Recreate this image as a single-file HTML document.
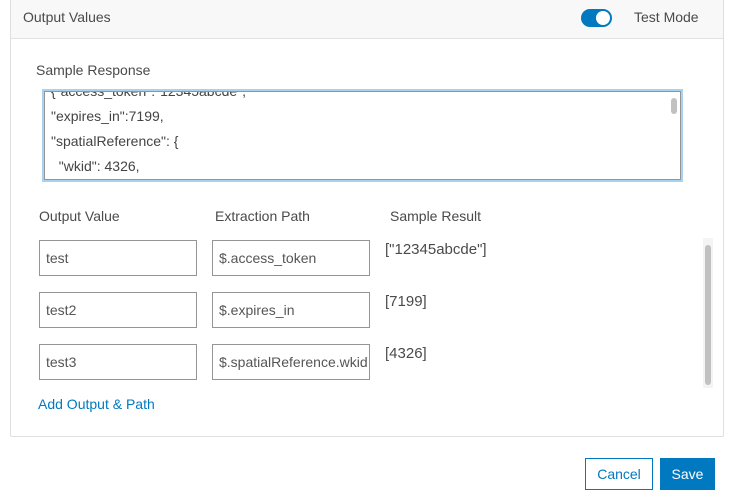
<!DOCTYPE html>
<html><head><style>
*{box-sizing:border-box;margin:0;padding:0}
body{width:737px;height:498px;background:#fff;font-family:"Liberation Sans",sans-serif;font-size:14px;color:#4a4a4a;position:relative;overflow:hidden}
.a{position:absolute}
.panel{left:10px;top:-1px;width:714px;height:438px;border:1px solid #dfdfdf;border-radius:2px}
.hdr{left:11px;top:0;width:712px;height:39px;background:#f8f8f8;border-bottom:1px solid #e2e2e2}
.inp{height:36px;border:1px solid #959595;padding-left:6px;line-height:34px;color:#555;background:#fff;white-space:nowrap;overflow:hidden}
</style></head><body>
<div class="a panel"></div>
<div class="a hdr"></div>
<div class="a" style="left:23px;top:9px;font-size:14px;color:#4a4a4a">Output Values</div>
<div class="a" style="left:581px;top:9px;width:31px;height:18px;border-radius:9px;background:#0079c1"></div>
<div class="a" style="left:596px;top:11px;width:14px;height:14px;border-radius:7px;background:#fff"></div>
<div class="a" style="left:634px;top:9px">Test Mode</div>
<div class="a" style="left:36px;top:62px">Sample Response</div>
<div class="a" style="left:42px;top:89px;width:641px;height:93px;border:2px solid #a9d2ef"></div>
<div class="a" style="left:44px;top:91px;width:637px;height:89px;border:1px solid #959595;overflow:hidden;background:#fff">
<div class="a" style="left:6px;top:-13px;line-height:25px;color:#444">
<div>{"access_token":"12345abcde",</div>
<div>"expires_in":7199,</div>
<div>"spatialReference": {</div>
<div>&nbsp;&nbsp;"wkid": 4326,</div></div>
<div class="a" style="right:3px;top:6px;width:6px;height:16px;background:#c1c1c1;border-radius:3px"></div>
</div>
<div class="a" style="left:39px;top:208px">Output Value</div>
<div class="a" style="left:215px;top:208px">Extraction Path</div>
<div class="a" style="left:390px;top:208px">Sample Result</div>
<div class="a inp" style="left:39px;top:240px;width:158px">test</div>
<div class="a inp" style="left:212px;top:240px;width:158px">$.access_token</div>
<div class="a" style="left:385px;top:241px;font-size:15px">["12345abcde"]</div>
<div class="a inp" style="left:39px;top:292px;width:158px">test2</div>
<div class="a inp" style="left:212px;top:292px;width:158px">$.expires_in</div>
<div class="a" style="left:385px;top:293px;font-size:15px">[7199]</div>
<div class="a inp" style="left:39px;top:344px;width:158px">test3</div>
<div class="a inp" style="left:212px;top:344px;width:158px">$.spatialReference.wkid</div>
<div class="a" style="left:385px;top:345px;font-size:15px">[4326]</div>
<div class="a" style="left:703px;top:238px;width:10px;height:150px;background:#f4f4f4"></div>
<div class="a" style="left:705px;top:245px;width:6px;height:140px;background:#c1c1c1;border-radius:3px"></div>
<div class="a" style="left:38px;top:396px;color:#0079c1">Add Output &amp; Path</div>
<div class="a" style="left:585px;top:458px;width:68px;height:32px;border:1px solid #0079c1;color:#0079c1;text-align:center;line-height:30px">Cancel</div>
<div class="a" style="left:660px;top:458px;width:55px;height:32px;background:#0079c1;color:#fff;text-align:center;line-height:32px">Save</div>
</body></html>
